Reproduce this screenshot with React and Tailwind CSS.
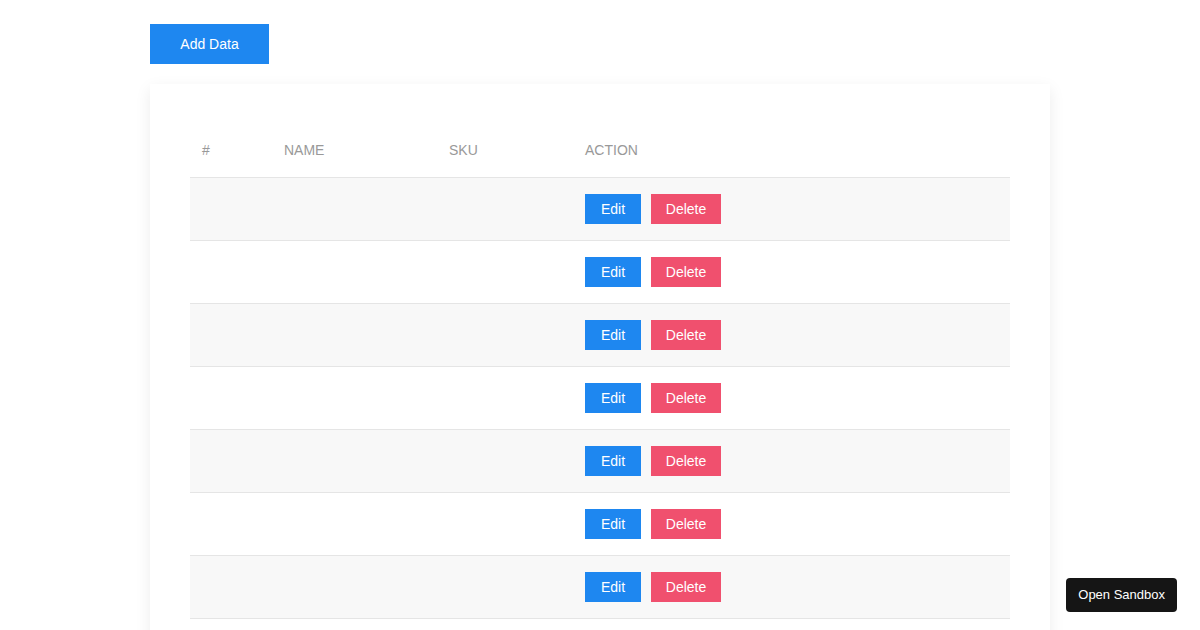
import React from "react";

const rows = Array.from({ length: 8 }, (_, i) => ({ id: i }));

const App = () => {
  return (
    <div
      className="min-h-screen bg-white text-[14px] text-[#666]"
      style={{ fontFamily: '"Liberation Sans", Arial, sans-serif' }}
    >
      <div className="w-[900px] ml-[150px] pt-[24px]">
        <button className="h-[40px] w-[119px] bg-[#1e87f0] text-white text-[14px] leading-[40px]">
          Add Data
        </button>

        <div className="mt-[20px] bg-white p-[40px] shadow-[0_5px_15px_rgba(0,0,0,0.08)]">
          <table className="w-full border-collapse">
            <thead>
              <tr className="border-b border-[#e5e5e5]">
                <th className="w-[82px] px-[12px] pt-[16px] pb-[16px] text-left font-normal uppercase text-[#999] text-[14px] align-bottom">
                  #
                </th>
                <th className="w-[165px] px-[12px] pt-[16px] pb-[16px] text-left font-normal uppercase text-[#999] text-[14px] align-bottom">
                  Name
                </th>
                <th className="w-[136px] px-[12px] pt-[16px] pb-[16px] text-left font-normal uppercase text-[#999] text-[14px] align-bottom">
                  SKU
                </th>
                <th className="px-[12px] pt-[16px] pb-[16px] text-left font-normal uppercase text-[#999] text-[14px] align-bottom">
                  Action
                </th>
              </tr>
            </thead>
            <tbody>
              {rows.map((row, i) => (
                <tr
                  key={row.id}
                  className={`border-b border-[#e5e5e5] ${i % 2 === 0 ? "bg-[#f8f8f8]" : "bg-white"}`}
                >
                  <td className="px-[12px] py-[16px]"></td>
                  <td className="px-[12px] py-[16px]"></td>
                  <td className="px-[12px] py-[16px]"></td>
                  <td className="px-[12px] py-[16px]">
                    <div className="flex gap-[10px]">
                      <button className="h-[30px] w-[56px] bg-[#1e87f0] text-white text-[14px] leading-[30px]">
                        Edit
                      </button>
                      <button className="h-[30px] w-[70px] bg-[#f0506e] text-white text-[14px] leading-[30px]">
                        Delete
                      </button>
                    </div>
                  </td>
                </tr>
              ))}
            </tbody>
          </table>
        </div>
      </div>

      <div className="fixed right-[23px] bottom-[18px] h-[34px] px-[12px] rounded-[4px] bg-[#151515] text-white text-[13px] leading-[34px]">
        Open Sandbox
      </div>
    </div>
  );
};

export default App;
